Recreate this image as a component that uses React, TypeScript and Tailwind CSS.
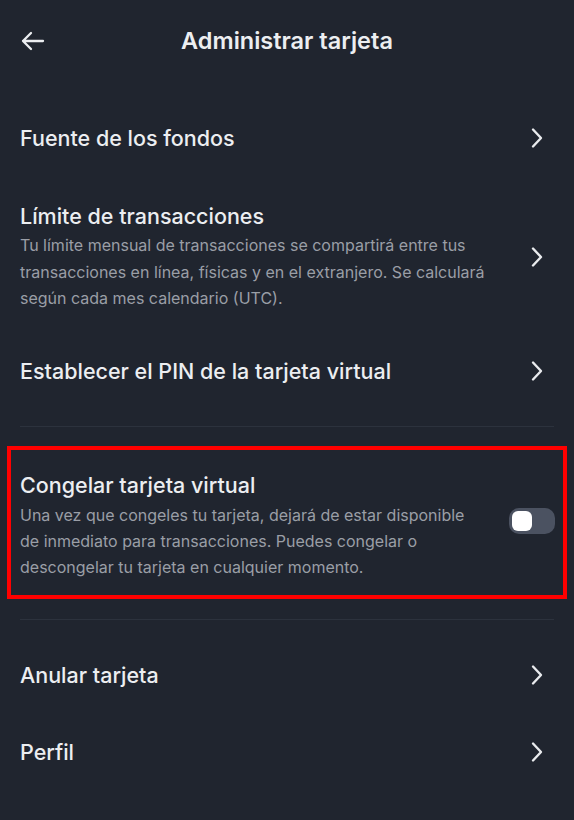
import React from "react";

const font = { fontFamily: "Inter, 'Open Sans', sans-serif" };

function Chevron() {
  return (
    <svg width="14" height="22" viewBox="0 0 14 22" fill="none" className="shrink-0">
      <path d="M3 2.5 L11 11 L3 19.5" stroke="#e9ebee" strokeWidth="2.4" strokeLinecap="round" strokeLinejoin="round" />
    </svg>
  );
}

function Row({ title, className = "" }: { title: string; className?: string }) {
  return (
    <div className={`flex items-center justify-between pl-5 pr-[30px] ${className}`}>
      <span className="text-[21.5px] leading-[28px] font-medium text-[#eceef1]">{title}</span>
      <Chevron />
    </div>
  );
}

export default function App() {
  return (
    <div className="min-h-[820px] w-full bg-[#20252f] text-[#eceef1]" style={font}>
      <header className="relative flex h-[82px] items-center justify-center">
        <svg width="26" height="20" viewBox="0 0 26 20" fill="none" className="absolute left-[20px] top-[31px]">
          <path d="M23 10 H3 M11 2 L3 10 L11 18" stroke="#eceef1" strokeWidth="2.3" strokeLinecap="round" strokeLinejoin="round" />
        </svg>
        <h1 className="text-[23.5px] font-semibold">Administrar tarjeta</h1>
      </header>

      <Row title="Fuente de los fondos" className="h-[111px]" />

      <div className="flex items-center justify-between pl-5 pr-[30px] pt-[9px]">
        <div className="w-[476px]">
          <div className="text-[21.5px] leading-[28px] font-medium">Límite de transacciones</div>
          <p className="mt-[2px] text-[16px] leading-[26.5px] text-[#9a9ea6]">
            Tu límite mensual de transacciones se compartirá entre tus transacciones en línea, físicas y en el extranjero. Se calculará según cada mes calendario (UTC).
          </p>
        </div>
        <Chevron />
      </div>

      <Row title="Establecer el PIN de la tarjeta virtual" className="mt-[45px]" />

      <div className="mx-5 mt-[41px] h-px bg-[#2c323d]" />

      <section className="mx-[7px] mt-[19px] flex items-center justify-between border-4 border-[#ff0000] pb-[15px] pl-[9px] pr-[8px] pt-[21px]">
        <div className="w-[462px]">
          <div className="text-[21.5px] leading-[28px] font-medium">Congelar tarjeta virtual</div>
          <p className="mt-[3px] text-[16px] leading-[26px] text-[#9a9ea6]">
            Una vez que congeles tu tarjeta, dejará de estar disponible de inmediato para transacciones. Puedes congelar o descongelar tu tarjeta en cualquier momento.
          </p>
        </div>
        <div className="mb-[8px] flex h-[26px] w-[46px] items-center rounded-[10px] bg-[#4b5261] px-[3px]">
          <div className="h-[20px] w-[20px] rounded-[6px] bg-white" />
        </div>
      </section>

      <div className="mx-5 mt-[20px] h-px bg-[#2c323d]" />

      <Row title="Anular tarjeta" className="mt-[41px]" />
      <Row title="Perfil" className="mt-[49px]" />
    </div>
  );
}
